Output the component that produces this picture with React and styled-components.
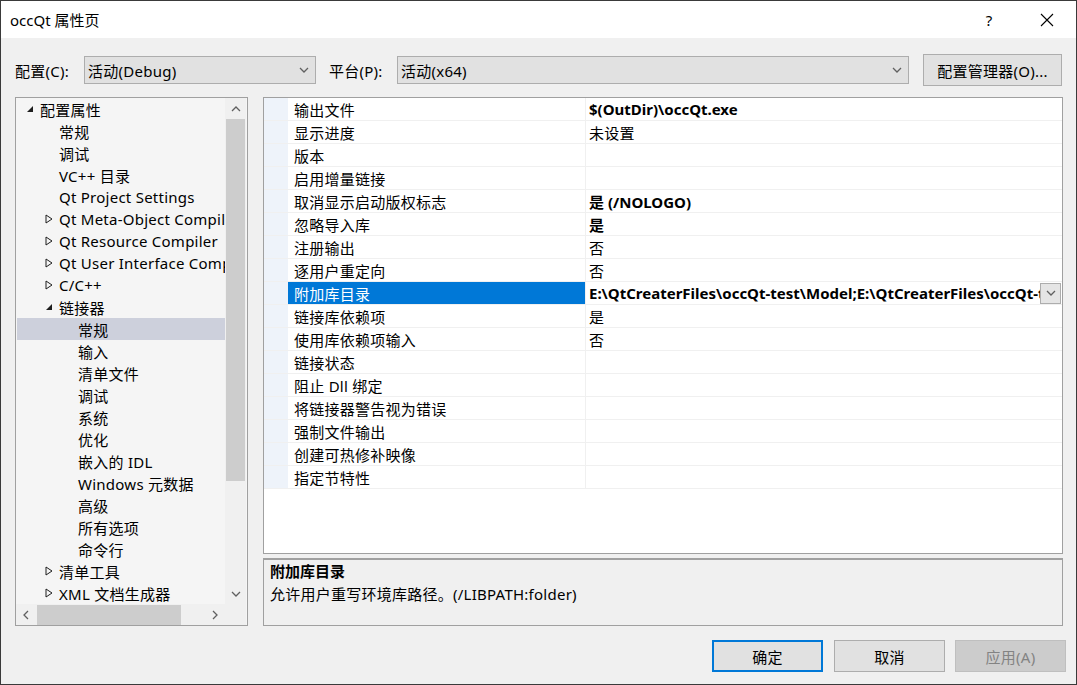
import React from "react";
import styled, { createGlobalStyle } from "styled-components";

const Global = createGlobalStyle`
  html, body { margin: 0; padding: 0; overflow: hidden; background: #f0f0f0; }
  * { box-sizing: border-box; }
  body {
    font-family: "Noto Sans", "Noto Sans CJK SC", sans-serif;
    font-size: 15px;
    letter-spacing: 0.25px;
    color: #000;
  }
`;

const Window = styled.div`
  width: 1077px;
  height: 685px;
  border: 1px solid #3a3a3a;
  background: #f0f0f0;
  display: flex;
  flex-direction: column;
`;

const TitleBar = styled.div`
  height: 37px;
  background: #fff;
  display: flex;
  align-items: center;
  padding-left: 9px;
  letter-spacing: 0;
`;

const TitleText = styled.div`
  flex: 1;
`;

const TitleBtn = styled.div`
  width: 58px;
  height: 37px;
  display: flex;
  align-items: center;
  justify-content: center;
`;

const Body = styled.div`
  flex: 1;
  display: flex;
  flex-direction: column;
  padding: 16px 13px 0 14px;
`;

const ConfigRow = styled.div`
  height: 32px;
  display: flex;
  align-items: center;
`;

const Label = styled.div`
  width: ${(p) => p.$w}px;
  flex-shrink: 0;
  white-space: nowrap;
`;

const Select = styled.div`
  width: ${(p) => p.$w}px;
  flex-shrink: 0;
  height: 28px;
  background: #e1e1e1;
  border: 1px solid #adadad;
  display: flex;
  align-items: center;
  padding-left: 3px;
  margin-right: ${(p) => p.$mr}px;
`;

const SelectText = styled.div`
  flex: 1;
`;

const ChevronBox = styled.div`
  width: 22px;
  display: flex;
  justify-content: center;
`;

const Button = styled.div`
  width: ${(p) => p.$w}px;
  flex-shrink: 0;
  height: 32px;
  display: flex;
  align-items: center;
  justify-content: center;
  background: ${(p) => (p.$disabled ? "#cccccc" : "#e1e1e1")};
  color: ${(p) => (p.$disabled ? "#838383" : "#000")};
  border: ${(p) => (p.$primary ? "2px solid #0078d7" : p.$disabled ? "1px solid #bfbfbf" : "1px solid #adadad")};
  margin-left: ${(p) => p.$ml || 0}px;
`;

const Main = styled.div`
  margin-top: 11px;
  display: flex;
  gap: 15px;
  height: 529px;
`;

const Tree = styled.div`
  width: 233px;
  flex-shrink: 0;
  border: 1px solid #a0a0a0;
  background: #f5f5f5;
  display: grid;
  grid-template-columns: 209px 21px;
  grid-template-rows: 1fr 21px;
`;

const TreeList = styled.div`
  overflow: hidden;
`;

const TreeRow = styled.div`
  height: 22px;
  display: flex;
  align-items: center;
  white-space: nowrap;
  padding-left: ${(p) => p.$indent}px;
  background: ${(p) => (p.$selected ? "#cdd0dc" : "transparent")};
  margin-left: 1px;
`;

const Arrow = styled.div`
  width: 14px;
  flex-shrink: 0;
  display: flex;
  align-items: center;
`;

const VScroll = styled.div`
  background: #f0f0f0;
  display: flex;
  flex-direction: column;
  align-items: center;
`;

const ScrollBtn = styled.div`
  width: 20px;
  height: ${(p) => p.$h}px;
  flex-shrink: 0;
  display: flex;
  align-items: center;
  justify-content: center;
`;

const VTrack = styled.div`
  flex: 1;
  width: 100%;
  display: flex;
  flex-direction: column;
  align-items: center;
`;

const VThumb = styled.div`
  width: 19px;
  height: 362px;
  background: #cdcdcd;
`;

const HScroll = styled.div`
  background: #f0f0f0;
  display: flex;
  align-items: center;
`;

const HThumb = styled.div`
  width: 144px;
  height: 20px;
  background: #cdcdcd;
  margin-left: 1px;
`;

const HGap = styled.div`
  flex: 1;
`;

const Corner = styled.div`
  background: #f0f0f0;
`;

const RightCol = styled.div`
  flex: 1;
  min-width: 0;
  display: flex;
  flex-direction: column;
  gap: 4px;
`;

const Grid = styled.div`
  height: 457px;
  border: 1px solid #a0a0a0;
  background: #fff;
`;

const PropRow = styled.div`
  height: 23px;
  display: flex;
  border-bottom: 1px solid #f0f0f0;
`;

const Strip = styled.div`
  width: 24px;
  flex-shrink: 0;
  background: #eef3fa;
`;

const NameCell = styled.div`
  width: 298px;
  flex-shrink: 0;
  padding-left: 6px;
  display: flex;
  align-items: center;
  background: ${(p) => (p.$selected ? "#0078d7" : "#fff")};
  color: ${(p) => (p.$selected ? "#fff" : "#000")};
  border-right: 1px solid #f0f0f0;
`;

const ValueCell = styled.div`
  flex: 1;
  min-width: 0;
  display: flex;
  align-items: center;
  padding-left: 3px;
  font-weight: ${(p) => (p.$bold ? 700 : 400)};
  letter-spacing: ${(p) => (p.$bold ? "0" : "0.25px")};
  white-space: nowrap;
`;

const ValueText = styled.div`
  flex: 1;
  min-width: 0;
  overflow: hidden;
`;

const DropBtn = styled.div`
  width: 21px;
  height: 21px;
  flex-shrink: 0;
  background: #e5e5e5;
  border: 1px solid #adadad;
  display: flex;
  align-items: center;
  justify-content: center;
  margin-right: 1px;
`;

const Desc = styled.div`
  flex: 1;
  border: 1px solid #a0a0a0;
  border-top-width: 2px;
  background: #f0f0f0;
  padding: 0 6px;
  line-height: 23px;
`;

const DescTitle = styled.div`
  font-weight: 700;
  letter-spacing: 0;
`;

const Footer = styled.div`
  margin-top: 14px;
  display: flex;
  justify-content: flex-end;
  margin-right: -3px;
`;

const Chevron = ({ dir = "down", color = "#606060" }) => {
  const paths = {
    down: "M1 3 L5 7 L9 3",
    up: "M1 7 L5 3 L9 7",
    left: "M7 1 L3 5 L7 9",
    right: "M3 1 L7 5 L3 9",
  };
  return (
    <svg width="10" height="10" viewBox="0 0 10 10">
      <path d={paths[dir]} fill="none" stroke={color} strokeWidth="1.3" />
    </svg>
  );
};

const Expanded = () => (
  <svg width="8" height="8" viewBox="0 0 8 8">
    <polygon points="7,1 7,7 1,7" fill="#1e1e1e" />
  </svg>
);

const Collapsed = () => (
  <svg width="8" height="10" viewBox="0 0 8 10">
    <polygon points="1,1 7,5 1,9" fill="none" stroke="#1e1e1e" strokeWidth="1" />
  </svg>
);

const treeItems = [
  { t: "配置属性", lvl: 0, arrow: "exp" },
  { t: "常规", lvl: 1 },
  { t: "调试", lvl: 1 },
  { t: "VC++ 目录", lvl: 1 },
  { t: "Qt Project Settings", lvl: 1 },
  { t: "Qt Meta-Object Compiler", lvl: 1, arrow: "col" },
  { t: "Qt Resource Compiler", lvl: 1, arrow: "col" },
  { t: "Qt User Interface Compiler", lvl: 1, arrow: "col" },
  { t: "C/C++", lvl: 1, arrow: "col" },
  { t: "链接器", lvl: 1, arrow: "exp" },
  { t: "常规", lvl: 2, sel: true },
  { t: "输入", lvl: 2 },
  { t: "清单文件", lvl: 2 },
  { t: "调试", lvl: 2 },
  { t: "系统", lvl: 2 },
  { t: "优化", lvl: 2 },
  { t: "嵌入的 IDL", lvl: 2 },
  { t: "Windows 元数据", lvl: 2 },
  { t: "高级", lvl: 2 },
  { t: "所有选项", lvl: 2 },
  { t: "命令行", lvl: 2 },
  { t: "清单工具", lvl: 1, arrow: "col" },
  { t: "XML 文档生成器", lvl: 1, arrow: "col" },
];

const props = [
  { n: "输出文件", v: "$(OutDir)\\occQt.exe", b: true },
  { n: "显示进度", v: "未设置" },
  { n: "版本", v: "" },
  { n: "启用增量链接", v: "" },
  { n: "取消显示启动版权标志", v: "是 (/NOLOGO)", b: true },
  { n: "忽略导入库", v: "是", b: true },
  { n: "注册输出", v: "否" },
  { n: "逐用户重定向", v: "否" },
  { n: "附加库目录", v: "E:\\QtCreaterFiles\\occQt-test\\Model;E:\\QtCreaterFiles\\occQt-test\\lib", b: true, sel: true },
  { n: "链接库依赖项", v: "是" },
  { n: "使用库依赖项输入", v: "否" },
  { n: "链接状态", v: "" },
  { n: "阻止 Dll 绑定", v: "" },
  { n: "将链接器警告视为错误", v: "" },
  { n: "强制文件输出", v: "" },
  { n: "创建可热修补映像", v: "" },
  { n: "指定节特性", v: "" },
];

const indentFor = [9, 28, 47];

export default function App() {
  return (
    <>
      <Global />
      <Window>
        <TitleBar>
          <TitleText>occQt 属性页</TitleText>
          <TitleBtn>?</TitleBtn>
          <TitleBtn>
            <svg width="14" height="14" viewBox="0 0 14 14">
              <path d="M1 1 L13 13 M13 1 L1 13" stroke="#000" strokeWidth="1.1" />
            </svg>
          </TitleBtn>
        </TitleBar>
        <Body>
          <ConfigRow>
            <Label $w={69}>配置(C):</Label>
            <Select $w={232} $mr={13}>
              <SelectText>活动(Debug)</SelectText>
              <ChevronBox>
                <Chevron />
              </ChevronBox>
            </Select>
            <Label $w={68}>平台(P):</Label>
            <Select $w={512} $mr={14}>
              <SelectText>活动(x64)</SelectText>
              <ChevronBox>
                <Chevron />
              </ChevronBox>
            </Select>
            <Button $w={139}>配置管理器(O)...</Button>
          </ConfigRow>
          <Main>
            <Tree>
              <TreeList>
                {treeItems.map((it, i) => (
                  <TreeRow key={i} $indent={indentFor[it.lvl]} $selected={it.sel}>
                    <Arrow>
                      {it.arrow === "exp" && <Expanded />}
                      {it.arrow === "col" && <Collapsed />}
                    </Arrow>
                    {it.t}
                  </TreeRow>
                ))}
              </TreeList>
              <VScroll>
                <ScrollBtn $h={21}>
                  <Chevron dir="up" />
                </ScrollBtn>
                <VTrack>
                  <VThumb />
                </VTrack>
                <ScrollBtn $h={21}>
                  <Chevron dir="down" />
                </ScrollBtn>
              </VScroll>
              <HScroll>
                <ScrollBtn $h={20}>
                  <Chevron dir="left" />
                </ScrollBtn>
                <HThumb />
                <HGap />
                <ScrollBtn $h={20}>
                  <Chevron dir="right" />
                </ScrollBtn>
              </HScroll>
              <Corner />
            </Tree>
            <RightCol>
              <Grid>
                {props.map((p, i) => (
                  <PropRow key={i}>
                    <Strip />
                    <NameCell $selected={p.sel}>{p.n}</NameCell>
                    <ValueCell $bold={p.b}>
                      <ValueText>{p.v}</ValueText>
                      {p.sel && (
                        <DropBtn>
                          <Chevron />
                        </DropBtn>
                      )}
                    </ValueCell>
                  </PropRow>
                ))}
              </Grid>
              <Desc>
                <DescTitle>附加库目录</DescTitle>
                <div>允许用户重写环境库路径。(/LIBPATH:folder)</div>
              </Desc>
            </RightCol>
          </Main>
          <Footer>
            <Button $w={111} $primary>确定</Button>
            <Button $w={111} $ml={11}>取消</Button>
            <Button $w={111} $ml={10} $disabled>应用(A)</Button>
          </Footer>
        </Body>
      </Window>
    </>
  );
}
